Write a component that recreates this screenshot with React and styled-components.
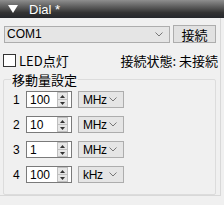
import React from "react";
import styled, { createGlobalStyle } from "styled-components";

const Global = createGlobalStyle`
  html, body { margin: 0; padding: 0; background: #f0f0f0; }
  body { font-family: "Noto Sans CJK JP", "Noto Sans", sans-serif; font-size: 13px; color: #000; }
`;

const Panel = styled.div`
  width: 224px;
  height: 205px;
  background: #f0f0f0;
  display: flex;
  flex-direction: column;
  overflow: hidden;
`;

const Header = styled.div`
  height: 22px;
  background: linear-gradient(#8e8e8e 0%, #606060 35%, #333 70%, #25272b 100%);
  display: flex;
  align-items: center;
  padding-left: 8px;
  gap: 11px;
  color: #fff;
  font-family: "Liberation Sans", Arial, sans-serif;
  font-size: 13px;
`;

const Body = styled.div`
  flex: 1;
  display: flex;
  flex-direction: column;
  padding: 7px 4px 0 4px;
  border-right: 1px solid #d8d8d8;
  border-bottom: 1px solid #d8d8d8;
  margin-right: 3px;
  margin-bottom: 9px;
`;

const Row = styled.div`
  display: flex;
  align-items: center;
  justify-content: space-between;
`;

const Combo = styled.div`
  width: 166px;
  height: 17px;
  box-sizing: border-box;
  border: 1px solid #adadad;
  background: #e5e5e5;
  display: flex;
  align-items: center;
  justify-content: space-between;
  padding: 0 6px 0 2px;
  font-family: "Liberation Sans", Arial, sans-serif;
  font-size: 12px;
`;

const Button = styled.div`
  width: 43px;
  height: 18px;
  box-sizing: border-box;
  border: 1px solid #adadad;
  background: #e1e1e1;
  display: flex;
  align-items: center;
  justify-content: center;
  font-size: 13px;
`;

const CheckRow = styled.div`
  display: flex;
  align-items: center;
  justify-content: space-between;
  margin-top: 8px;
  margin-left: -1px;
`;

const CheckLabel = styled.label`
  display: flex;
  align-items: center;
  gap: 3px;
  font-size: 13px;
`;

const Box = styled.span`
  width: 13px;
  height: 13px;
  box-sizing: border-box;
  border: 1px solid #333;
  background: #fff;
`;

const Status = styled.span`
  font-size: 13px;
  margin-right: -2px;
`;

const Group = styled.fieldset`
  margin: 0 0 0 -1px;
  padding: 2px 0 11px 9px;
  border: 1px solid #dcdcdc;
  border-radius: 2px;
  display: flex;
  flex-direction: column;
  gap: 8px;
  min-width: 0;
`;

const Legend = styled.legend`
  font-size: 13px;
  padding: 0 1px;
  margin-left: -2px;
`;

const ItemRow = styled.div`
  display: flex;
  align-items: center;
`;

const Num = styled.span`
  width: 13px;
  font-family: "Liberation Sans", Arial, sans-serif;
  font-size: 12px;
`;

const Spin = styled.div`
  width: 46px;
  height: 17px;
  box-sizing: border-box;
  border: 1px solid #7a7a7a;
  background: #fff;
  display: flex;
  align-items: center;
  justify-content: space-between;
  padding-left: 3px;
  font-family: "Liberation Sans", Arial, sans-serif;
  font-size: 12px;
`;

const SpinBtns = styled.div`
  width: 11px;
  height: 15px;
  margin-right: 3px;
  box-sizing: border-box;
  border: 1px solid #bfbfbf;
  background: #e6e6e6;
  display: flex;
  flex-direction: column;
`;

const SpinBtn = styled.div`
  flex: 1;
  display: flex;
  align-items: center;
  justify-content: center;
  border-top: ${(p) => (p.$lower ? "1px solid #bfbfbf" : "none")};
`;

const Select = styled.div`
  width: 46px;
  height: 17px;
  margin-left: 6px;
  box-sizing: border-box;
  border: 1px solid #adadad;
  background: #e5e5e5;
  display: flex;
  align-items: center;
  justify-content: space-between;
  padding: 0 6px 0 4px;
  font-family: "Liberation Sans", Arial, sans-serif;
  font-size: 12px;
  letter-spacing: -0.3px;
`;

const Chevron = () => (
  <svg width="8" height="5" viewBox="0 0 8 5">
    <path d="M0.5 0.5 L4 4 L7.5 0.5" fill="none" stroke="#777" strokeWidth="1" />
  </svg>
);

const Tri = ({ up }) => (
  <svg width="5" height="3" viewBox="0 0 5 3">
    <path d={up ? "M0 3 L2.5 0 L5 3Z" : "M0 0 L2.5 3 L5 0Z"} fill="#333" />
  </svg>
);

const rows = [
  { n: 1, v: "100", u: "MHz" },
  { n: 2, v: "10", u: "MHz" },
  { n: 3, v: "1", u: "MHz" },
  { n: 4, v: "100", u: "kHz" },
];

export default function App() {
  return (
    <>
      <Global />
      <Panel>
        <Header>
          <svg width="10" height="8" viewBox="0 0 10 8">
            <path d="M0 0 L10 0 L5 8Z" fill="#fff" />
          </svg>
          <span>Dial *</span>
        </Header>
        <Body>
          <Row>
            <Combo>
              <span>COM1</span>
              <Chevron />
            </Combo>
            <Button>接続</Button>
          </Row>
          <CheckRow>
            <CheckLabel>
              <Box />
              LED点灯
            </CheckLabel>
            <Status>接続状態: 未接続</Status>
          </CheckRow>
          <Group>
            <Legend>移動量設定</Legend>
            {rows.map((r) => (
              <ItemRow key={r.n}>
                <Num>{r.n}</Num>
                <Spin>
                  <span>{r.v}</span>
                  <SpinBtns>
                    <SpinBtn><Tri up /></SpinBtn>
                    <SpinBtn $lower><Tri /></SpinBtn>
                  </SpinBtns>
                </Spin>
                <Select>
                  <span>{r.u}</span>
                  <Chevron />
                </Select>
              </ItemRow>
            ))}
          </Group>
        </Body>
      </Panel>
    </>
  );
}
